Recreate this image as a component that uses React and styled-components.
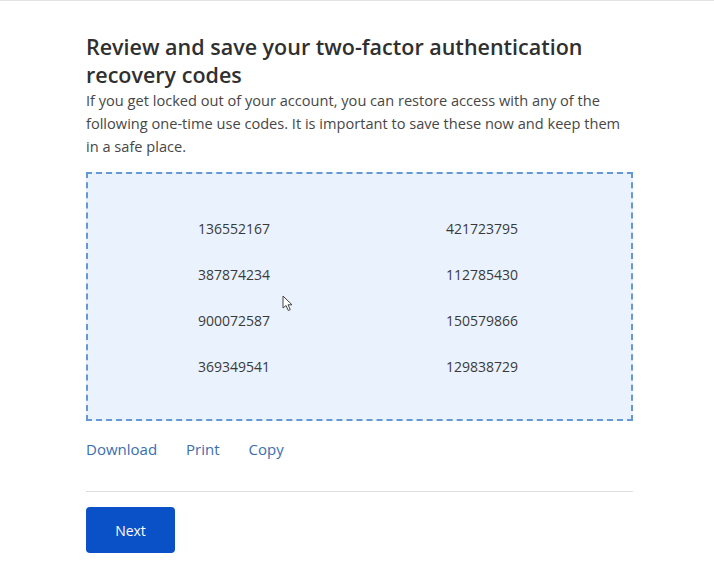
import styled, { createGlobalStyle } from "styled-components";

const GlobalStyle = createGlobalStyle`
    html, body {
        margin: 0;
        padding: 0;
        background: #ffffff;
    }
    body {
        font-family: "Open Sans", "Noto Sans", Arial, sans-serif;
        color: #333;
    }
`

const Page = styled.div`
    box-sizing: border-box;
    border-top: 1px solid #e3e3e3;
    height: 576px;
    padding: 32px 81px 0 86px;
`
const Title = styled.h1`
    margin: 0;
    font-size: 21.5px;
    line-height: 28px;
    font-weight: 600;
    color: #303030;
`
const Intro = styled.p`
    margin: 0;
    max-width: 535px;
    font-size: 14.6px;
    line-height: 23px;
    color: #474747;
`
const CodeBox = styled.div`
    position: relative;
    margin-top: 14px;
    height: 249px;
    box-sizing: border-box;
    padding: 31px 110px 33px;
    background: #eaf3fd;
    border: 2px dashed #6499d6;
    display: grid;
    grid-template-columns: 248px auto;
    grid-auto-rows: 46px;
    align-items: center;
`
const Code = styled.span`
    font-size: 14px;
    color: #3a3a3a;
`
const Pointer = styled.svg`
    position: absolute;
    left: 194px;
    top: 121px;
    width: 12px;
    height: 17px;
`
const Actions = styled.div`
    display: flex;
    gap: 29px;
    height: 55px;
    align-items: center;
    border-bottom: 1px solid #dedede;
    padding-bottom: 15px;
`
const ActionLink = styled.a`
    font-size: 15px;
    color: #3a6eb2;
    text-decoration: none;
    cursor: pointer;
`
const NextButton = styled.button`
    margin-top: 15px;
    width: 89px;
    height: 46px;
    border: none;
    border-radius: 4px;
    background: #0a50c6;
    color: #fff;
    font-family: inherit;
    font-size: 14px;
    cursor: pointer;
`

const codes = [
    "136552167", "421723795",
    "387874234", "112785430",
    "900072587", "150579866",
    "369349541", "129838729",
];

const App = () => {
    return (
        <>
            <GlobalStyle />
            <Page>
                <Title>Review and save your two-factor authentication recovery codes</Title>
                <Intro>
                    If you get locked out of your account, you can restore access with any of the
                    following one-time use codes. It is important to save these now and keep them
                    in a safe place.
                </Intro>
                <CodeBox>
                    {codes.map((c) => (
                        <Code key={c}>{c}</Code>
                    ))}
                    <Pointer viewBox="0 0 12 17">
                        <path d="M1 1 L1 13 L4 10.5 L6.3 15.5 L8.3 14.6 L6 9.8 L10 9.8 Z" fill="#fff" stroke="#444" strokeWidth="1" strokeLinejoin="round" />
                    </Pointer>
                </CodeBox>
                <Actions>
                    <ActionLink>Download</ActionLink>
                    <ActionLink>Print</ActionLink>
                    <ActionLink>Copy</ActionLink>
                </Actions>
                <NextButton>Next</NextButton>
            </Page>
        </>
    );
};

export default App;
